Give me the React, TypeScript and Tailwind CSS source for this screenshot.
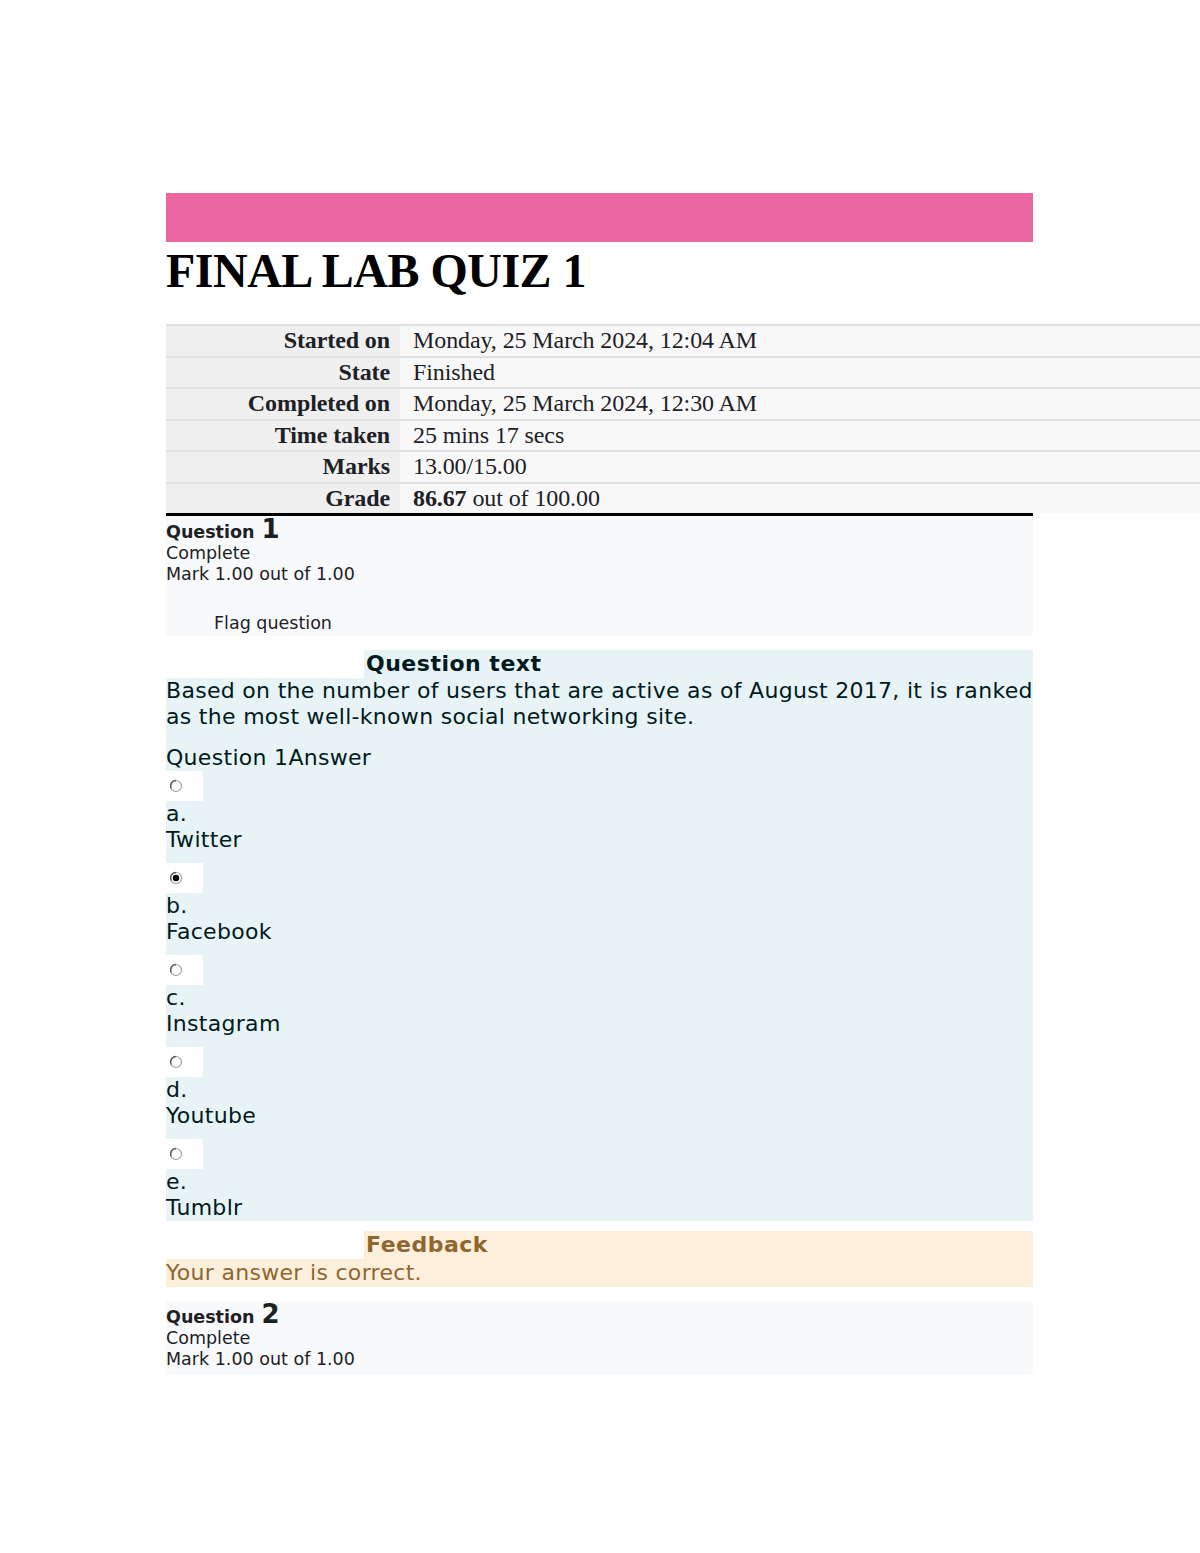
import React from "react";

type Row = {
    label: string;
    value: React.ReactNode;
};

const rows: Row[] = [
    {label: "Started on", value: "Monday, 25 March 2024, 12:04 AM"},
    {label: "State", value: "Finished"},
    {label: "Completed on", value: "Monday, 25 March 2024, 12:30 AM"},
    {label: "Time taken", value: "25 mins 17 secs"},
    {label: "Marks", value: "13.00/15.00"},
    {label: "Grade", value: <><b className="font-bold">86.67</b> out of 100.00</>},
];

const options = [
    {letter: "a.", text: "Twitter", checked: false},
    {letter: "b.", text: "Facebook", checked: true},
    {letter: "c.", text: "Instagram", checked: false},
    {letter: "d.", text: "Youtube", checked: false},
    {letter: "e.", text: "Tumblr", checked: false},
];

const Radio = ({checked}: {checked: boolean}) => (
    <div className="w-[37px] h-[30px] bg-white flex items-center pl-[3px]">
        <svg width="14" height="14" viewBox="0 0 14 14">
            <circle cx="7" cy="7" r="5.5" fill="#fff" stroke="#a0a0a0" strokeWidth="1.2" />
            <path d="M2.2 9.5 A5.5 5.5 0 0 1 7 1.5" fill="none" stroke="#555" strokeWidth="1.4" />
            {checked && <circle cx="7" cy="7" r="3.2" fill="#000" />}
        </svg>
    </div>
);

const QuestionInfo = ({num, flag}: {num: number; flag?: boolean}) => (
    <div className={"bg-[#f8f9fa] text-[#1d2125] text-[17.5px] leading-[21px] pt-[3px] " + (flag ? "pb-[2px]" : "pb-[5px]")}>
        <div className="flex items-baseline h-[24px]">
            <span className="font-bold">Question</span>
            <span className="font-bold text-[26px] ml-[7px]">{num}</span>
        </div>
        <div>Complete</div>
        <div>Mark 1.00 out of 1.00</div>
        {flag && <div className="pl-[48px] pt-[28px]">Flag question</div>}
    </div>
);

export default function App() {
    return (
        <div className="min-h-[1553px] w-[1200px] overflow-hidden bg-white pt-[193px] pl-[166px] font-['DejaVu_Sans',sans-serif]">
            <div className="w-[867px]">
                <div className="h-[49px] bg-[#eb65a0]" />
                <h1 className="font-['Liberation_Serif',serif] font-bold text-[48px] leading-[56px] text-black mt-[1px] tracking-[-0.5px]">
                    FINAL LAB QUIZ 1
                </h1>

                <div className="mt-[25px] w-[1034px] font-['Liberation_Serif',serif] text-[24px] tracking-[-0.1px] text-[#1d2125]">
                    {rows.map((r) => (
                        <div key={r.label} className="flex h-[31.5px] border-t-2 border-[#dee2e6]">
                            <div className="w-[234px] bg-[#efefef] text-right pr-[10px] font-bold leading-[29px]">
                                {r.label}
                            </div>
                            <div className="flex-1 bg-[#f8f8f8] pl-[13px] leading-[29px]">{r.value}</div>
                        </div>
                    ))}
                </div>
                <div className="h-[3px] bg-black" />

                <QuestionInfo num={1} flag />

                <div className="mt-[14px] bg-[#e7f3f5] text-[#001a1e] text-[22px] tracking-[0.3px]">
                    <div className="flex">
                        <div className="w-[198px] bg-white" />
                        <div className="font-bold leading-[28px] pl-[2px] tracking-[0.5px]">Question text</div>
                    </div>
                    <div className="leading-[26px]">
                        Based on the number of users that are active as of August 2017, it is ranked as the most
                        well-known social networking site.
                    </div>
                    <div className="leading-[26px] mt-[15px]">Question 1Answer</div>
                    <div className="flex flex-col gap-[10px]">
                        {options.map((o) => (
                            <div key={o.letter} className="leading-[26px]">
                                <Radio checked={o.checked} />
                                <div>{o.letter}</div>
                                <div>{o.text}</div>
                            </div>
                        ))}
                    </div>
                </div>

                <div className="mt-[10px] bg-[#fcefdc] text-[#8e662e] text-[22px] tracking-[0.3px]">
                    <div className="flex">
                        <div className="w-[198px] bg-white" />
                        <div className="font-bold leading-[28px] pl-[2px] tracking-[0.5px]">Feedback</div>
                    </div>
                    <div className="leading-[28px]">Your answer is correct.</div>
                </div>

                <div className="mt-[14px]">
                    <QuestionInfo num={2} />
                </div>
            </div>
        </div>
    );
}
